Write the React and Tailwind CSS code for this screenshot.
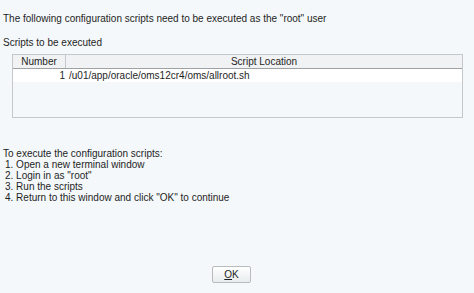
export default function App() {
  const font = { fontFamily: '"Liberation Sans", Arial, sans-serif' };
  return (
    <div className="w-[474px] h-[293px] bg-[#f4f8fa] text-[#1e1e1e] text-[10px] leading-[11px] flex flex-col relative" style={font}>
      <div className="pl-[3px] pt-[13px]">The following configuration scripts need to be executed as the "root" user</div>
      <div className="pl-[3px] pt-[13px]">Scripts to be executed</div>
      <div className="ml-[12px] mt-[6px] w-[451px] h-[64px] border border-[#c4c8cb] bg-[#f4f8fa] flex flex-col">
        <div className="flex h-[14px] bg-[#f0f2f3] border-b border-[#9ea2a5]">
          <div className="w-[53px] border-r border-[#c4c8cb] text-center leading-[13px]">Number</div>
          <div className="flex-1 text-center leading-[13px]">Script Location</div>
        </div>
        <div className="flex h-[13px] bg-white leading-[13px]">
          <div className="w-[53px] text-right pr-[1px]">1</div>
          <div className="flex-1 pl-[3px]">/u01/app/oracle/oms12cr4/oms/allroot.sh</div>
        </div>
      </div>
      <div className="pl-[3px] pt-[30px] flex flex-col">
        <div className="h-[11px]">To execute the configuration scripts:</div>
        <div className="h-[11px] pl-[2px]">1. Open a new terminal window</div>
        <div className="h-[11px] pl-[2px]">2. Login in as "root"</div>
        <div className="h-[11px] pl-[2px]">3. Run the scripts</div>
        <div className="h-[11px] pl-[2px]">4. Return to this window and click "OK" to continue</div>
      </div>
      <div className="flex-1" />
      <div className="flex justify-center pb-[10px] pr-[11px]">
        <button className="w-[39px] h-[17px] border border-[#b8bcbf] rounded-[2px] bg-gradient-to-b from-white to-[#e8ecee] text-[10px] leading-[15px]">
          <span className="underline">O</span>K
        </button>
      </div>
    </div>
  );
}
